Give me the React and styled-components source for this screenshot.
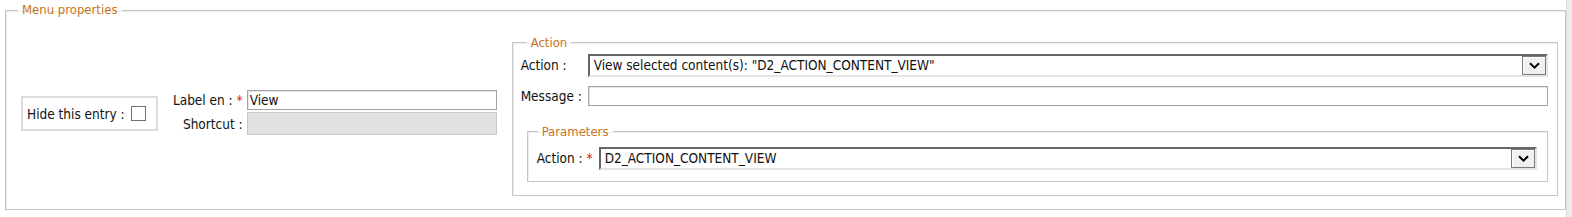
import React from 'react';
import styled, { createGlobalStyle } from 'styled-components';

const GlobalStyle = createGlobalStyle`
  html, body {
    margin: 0;
    padding: 0;
    background: #fff;
  }
  body {
    font-family: 'DejaVu Sans Condensed', 'DejaVu Sans', Tahoma, sans-serif;
    font-size: 13.5px;
    color: #111;
  }
`;

const Chevron = () => (
  <svg width="11" height="7" viewBox="0 0 11 7">
    <path d="M1 1.2 L5.5 5.6 L10 1.2" fill="none" stroke="#000" strokeWidth="2" />
  </svg>
);

const Select = ({ value }) => (
  <StyledSelect>
    <span>{value}</span>
    <StyledArrow>
      <Chevron />
    </StyledArrow>
  </StyledSelect>
);

const App = () => (
  <>
    <GlobalStyle />
    <StyledPage>
      <StyledMain>
        <StyledFieldset $outer>
          <StyledLegend $indent={-3}>Menu properties</StyledLegend>
          <StyledRow>
            <StyledHideBox>
              Hide this entry :
              <StyledCheckbox />
            </StyledHideBox>

            <StyledLabelGrid>
              <StyledLabel>
                Label en : <StyledRequired>*</StyledRequired>
              </StyledLabel>
              <StyledInput>View</StyledInput>
              <StyledLabel>Shortcut :</StyledLabel>
              <StyledInput $disabled />
            </StyledLabelGrid>

            <StyledFieldset $grow>
              <StyledLegend $indent={6}>Action</StyledLegend>
              <StyledFormGrid>
                <span>Action :</span>
                <Select value={'View selected content(s): "D2_ACTION_CONTENT_VIEW"'} />
                <span>Message :</span>
                <StyledInput />
              </StyledFormGrid>

              <StyledFieldset $inner>
                <StyledLegend $indent={2}>Parameters</StyledLegend>
                <StyledParamRow>
                  <span>
                    Action : <StyledRequired>*</StyledRequired>
                  </span>
                  <Select value="D2_ACTION_CONTENT_VIEW" />
                </StyledParamRow>
              </StyledFieldset>
            </StyledFieldset>
          </StyledRow>
        </StyledFieldset>
      </StyledMain>
      <StyledScrollTrack />
    </StyledPage>
  </>
);

const StyledPage = styled.div`
  display: flex;
  width: 1572px;
  height: 217px;
  overflow: hidden;
`;

const StyledMain = styled.div`
  flex: 1;
  padding: 1px 0 0 5px;
`;

const StyledScrollTrack = styled.div`
  width: 5px;
  background: #ececec;
  border-left: 1px solid #dcdcdc;
`;

const StyledFieldset = styled.fieldset`
  margin: ${({ $inner }) => ($inner ? '17px 0 0 6px' : '0')};
  padding: ${({ $outer, $inner }) =>
    $outer ? '7px 7px 6px 15px' : $inner ? '6px 10px 11px 8px' : '2px 9px 13px 8px'};
  border: 1px solid #c6c6c6;
  box-shadow: inset 1px 1px 0 #ececec;
  min-width: 0;
  ${({ $outer }) => $outer && 'height: 209px; box-sizing: border-box;'}
  ${({ $grow }) => $grow && 'flex: 1;'}
`;

const StyledLegend = styled.legend`
  padding: 0 4px;
  margin-left: ${({ $indent }) => $indent}px;
  color: #c7761c;
  font-size: 13px;
  line-height: 18px;
`;

const StyledRow = styled.div`
  display: flex;
  align-items: center;
  height: 100%;
`;

const StyledHideBox = styled.div`
  display: flex;
  align-items: center;
  gap: 6px;
  height: 31px;
  padding: 0 10px 0 4px;
  border: 2px solid #dcdcdc;
  margin-top: -2px;
`;

const StyledCheckbox = styled.span`
  width: 13px;
  height: 13px;
  border: 1px solid #707070;
  background: #fff;
`;

const StyledLabelGrid = styled.div`
  display: grid;
  grid-template-columns: 72px 250px;
  column-gap: 4px;
  row-gap: 2px;
  align-items: center;
  margin: -4px 15px 0 13px;
`;

const StyledLabel = styled.span`
  text-align: right;
  white-space: nowrap;
`;

const StyledRequired = styled.span`
  color: #e02020;
`;

const StyledInput = styled.div`
  box-sizing: border-box;
  height: ${({ $disabled }) => ($disabled ? 23 : 20)}px;
  line-height: 18px;
  padding: 0 2px;
  border: 1px solid ${({ $disabled }) => ($disabled ? '#c9c9c9' : '#a3a3a3')};
  background: ${({ $disabled }) => ($disabled ? '#e1e1e1' : '#fff')};
  box-shadow: ${({ $disabled }) => ($disabled ? 'none' : 'inset 1px 1px 0 #e6e6e6')};
`;

const StyledFormGrid = styled.div`
  display: grid;
  grid-template-columns: 67px 1fr;
  row-gap: 9px;
  align-items: center;
`;

const StyledParamRow = styled.div`
  display: grid;
  grid-template-columns: 62px 1fr;
  align-items: center;
  padding-left: 1px;
`;

const StyledSelect = styled.div`
  box-sizing: border-box;
  display: flex;
  align-items: center;
  justify-content: space-between;
  height: 23px;
  padding-left: 4px;
  border-top: 2px solid #666;
  border-left: 2px solid #666;
  border-bottom: 2px solid #e4e4e4;
  border-right: 2px solid #e4e4e4;
  background: #fff;
  white-space: nowrap;
`;

const StyledArrow = styled.span`
  display: flex;
  align-items: center;
  justify-content: center;
  width: 22px;
  height: 17px;
  background: #f0f0f0;
  border: 1px solid #7a7a7a;
  box-shadow: inset 1px 1px 0 #fff;
`;

export default App;
